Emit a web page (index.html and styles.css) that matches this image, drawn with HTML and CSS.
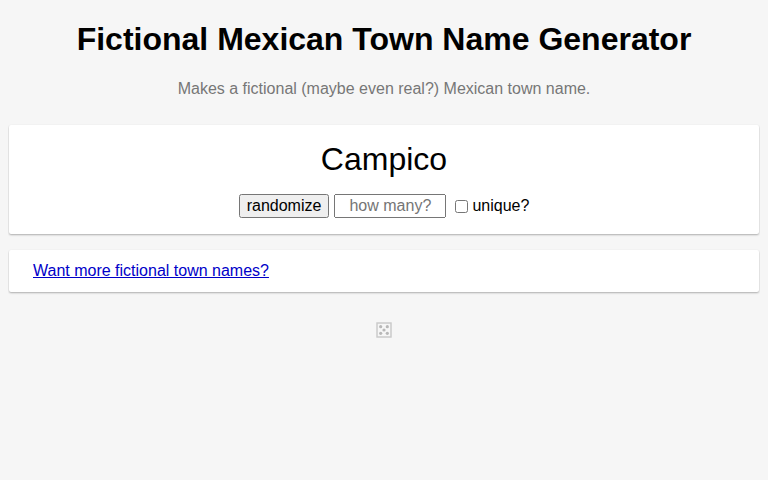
FILE: index.html
```html
<!DOCTYPE html>
<html lang="en">
<head>
  <meta charset="UTF-8">
  <title>Fictional Mexican Town Name Generator</title>
  <meta name="viewport" content="width=device-width, initial-scale=1.0">
  <link rel="stylesheet" href="styles.css">
</head>
<body>

<h1>Fictional Mexican Town Name Generator</h1>
<p class="intro">Makes a fictional (maybe even real?) Mexican town name.</p>

<main class="card generator">
  <div class="result" id="result">Campico</div>
  <form class="controls" id="controls">
    <button type="submit">randomize</button>
    <input class="count" type="text" inputmode="numeric" placeholder="how many?" aria-label="how many?">
    <span class="unique">
      <input type="checkbox" id="unique">
      <label for="unique">unique?</label>
    </span>
  </form>
</main>

<div class="card more">
  <a href="#more">Want more fictional town names?</a>
</div>

<footer>
  <a class="die" href="#home" aria-label="Home">
    <svg width="16" height="16" viewBox="0 0 16 16">
      <rect x="1" y="1" width="14" height="14" fill="none" stroke="#c8c8c8" stroke-width="1.4"/>
      <g fill="#b8b8b8">
        <circle cx="4.7" cy="4.7" r="1.6"/>
        <circle cx="11.3" cy="4.7" r="1.6"/>
        <circle cx="8" cy="8" r="1.6"/>
        <circle cx="4.7" cy="11.3" r="1.6"/>
        <circle cx="11.3" cy="11.3" r="1.6"/>
      </g>
    </svg>
  </a>
</footer>

</body>
</html>
```

FILE: styles.css
```css
body {
  margin: 0 8px;
  font-family: "Liberation Sans", Arial, sans-serif;
  font-size: 16px;
  background: #f6f6f6;
  color: #000;
  text-align: center;
}

h1 {
  margin: 21px 0;
  font-size: 32px;
}

.intro {
  margin: 22px 0 27px;
  color: #777;
}

.card {
  margin: 16px 1px;
  background: #fff;
  border-radius: 2px;
  box-shadow: 0 1px 2px rgba(0, 0, 0, 0.3);
}

.generator {
  padding: 16px;
}

.result {
  margin-bottom: 16px;
  font-size: 32px;
}

.controls {
  display: flex;
  justify-content: center;
  align-items: center;
  gap: 5px;
}

button,
.count {
  box-sizing: border-box;
  height: 24px;
  font: inherit;
}

.count {
  width: 112px;
  text-align: center;
}

.unique {
  display: flex;
  align-items: center;
  gap: 4px;
}

.unique input {
  margin: 0 0 0 4px;
}

.more {
  padding: 12px 24px;
  text-align: left;
}

.more a {
  color: #0000c8;
}

footer {
  display: flex;
  justify-content: center;
  margin-top: 30px;
}

.die svg {
  display: block;
}
```
